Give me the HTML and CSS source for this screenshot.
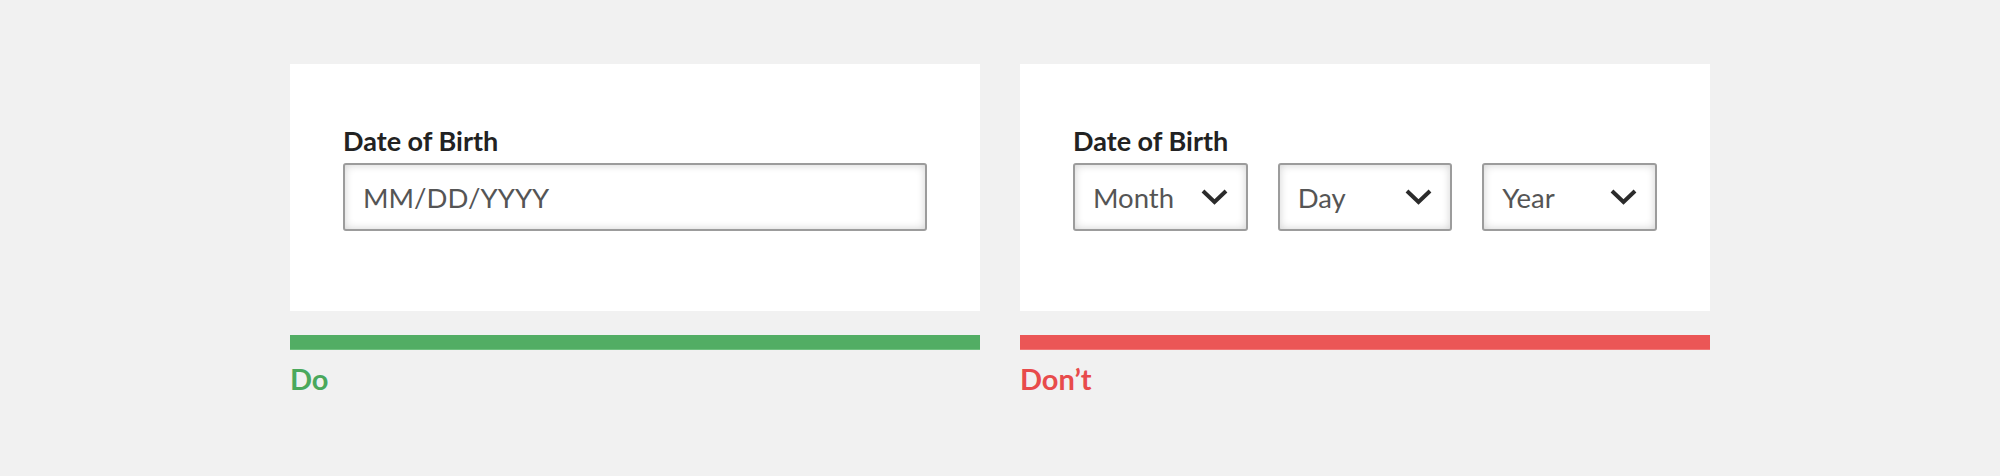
FILE: index.html
```html
<!DOCTYPE html>
<html lang="en">
<head>
    <meta charset="UTF-8">
    <meta name="viewport" content="width=device-width, initial-scale=1.0">
    <title>Date of Birth - Do / Don't</title>
    <link rel="stylesheet" href="styles.css">
</head>
<body>
    <div class="examples">
        <div class="example">
            <div class="card">
                <div class="field-label">Date of Birth</div>
                <div class="text-input">MM/DD/YYYY</div>
            </div>
            <div class="bar bar-do"></div>
            <div class="verdict verdict-do">Do</div>
        </div>
        <div class="example">
            <div class="card">
                <div class="field-label">Date of Birth</div>
                <div class="select-row">
                    <div class="select">
                        <span>Month</span>
                        <svg class="chevron" width="27" height="16" viewBox="0 0 27 16"><polyline points="2,2 13.5,13 25,2" fill="none" stroke="#2b2b2b" stroke-width="4"/></svg>
                    </div>
                    <div class="select">
                        <span>Day</span>
                        <svg class="chevron" width="27" height="16" viewBox="0 0 27 16"><polyline points="2,2 13.5,13 25,2" fill="none" stroke="#2b2b2b" stroke-width="4"/></svg>
                    </div>
                    <div class="select">
                        <span>Year</span>
                        <svg class="chevron" width="27" height="16" viewBox="0 0 27 16"><polyline points="2,2 13.5,13 25,2" fill="none" stroke="#2b2b2b" stroke-width="4"/></svg>
                    </div>
                </div>
            </div>
            <div class="bar bar-dont"></div>
            <div class="verdict verdict-dont">Don’t</div>
        </div>
    </div>
</body>
</html>
```

FILE: styles.css
```css
body {
    font-family: Lato, "Open Sans", sans-serif;
    margin: 0;
    padding: 0;
    background: #f1f1f1;
}

.examples {
    display: flex;
    justify-content: center;
    gap: 40px;
    padding-top: 64px;
}

.example {
    width: 690px;
}

.card {
    background: #fff;
    height: 247px;
    box-sizing: border-box;
    padding: 62px 53px 0;
}

.field-label {
    font-size: 27px;
    line-height: 30px;
    font-weight: bold;
    color: #222;
    margin-bottom: 7px;
}

.text-input,
.select {
    height: 68px;
    box-sizing: border-box;
    border: 2px solid #9c9c9c;
    border-radius: 3px;
    box-shadow: inset 0 0 9px rgba(0, 0, 0, 0.18);
    display: flex;
    align-items: center;
    padding: 0 18px;
    font-size: 27.5px;
    color: #555;
}

.text-input {
    width: 584px;
}

.select-row {
    display: flex;
    gap: 30px;
}

.select {
    width: 175px;
    justify-content: space-between;
}

.chevron {
    display: block;
}

.bar {
    height: 15px;
    margin-top: 24px;
    box-sizing: border-box;
}

.bar-do {
    background: #52ad64;
    border-bottom: 1px solid #6fc07f;
}

.bar-dont {
    background: #eb5656;
    border-bottom: 1px solid #f07777;
}

.verdict {
    font-size: 29px;
    font-weight: bold;
    margin-top: 11px;
}

.verdict-do {
    color: #4aa85c;
}

.verdict-dont {
    color: #e84b4b;
}
```
